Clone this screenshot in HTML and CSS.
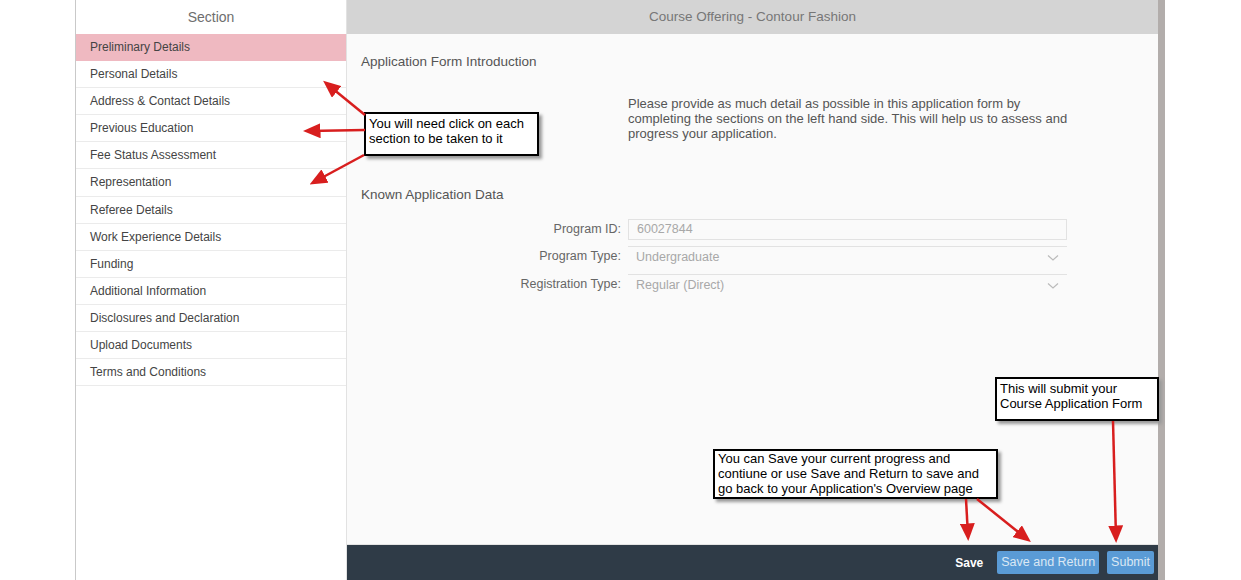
FILE: index.html
```html
<!DOCTYPE html>
<html lang="en">

<head>
    <meta charset="UTF-8">
    <meta name="viewport" content="width=device-width, initial-scale=1.0">
    <title>Course Offering - Contour Fashion</title>
    <link rel="stylesheet" href="styles.css">
</head>

<body>
    <div class="app">
        <!-- section list -->
        <div class="sidebar">
            <div class="sidebar-title">Section</div>
            <ul class="section-list">
                <li class="active">Preliminary Details</li>
                <li>Personal Details</li>
                <li>Address &amp; Contact Details</li>
                <li>Previous Education</li>
                <li>Fee Status Assessment</li>
                <li>Representation</li>
                <li>Referee Details</li>
                <li>Work Experience Details</li>
                <li>Funding</li>
                <li>Additional Information</li>
                <li>Disclosures and Declaration</li>
                <li>Upload Documents</li>
                <li>Terms and Conditions</li>
            </ul>
        </div>
        <!-- main panel -->
        <div class="main">
            <div class="main-title">Course Offering - Contour Fashion</div>
            <div class="main-body">
                <h3 class="block-title intro-title">Application Form Introduction</h3>
                <p class="intro-text">Please provide as much detail as possible in this application form by completing the sections on the left hand side. This will help us to assess and progress your application.</p>
                <h3 class="block-title data-title">Known Application Data</h3>
                <div class="form-grid">
                    <label>Program ID:</label>
                    <div class="field field-input">60027844</div>
                    <label>Program Type:</label>
                    <div class="field field-select">Undergraduate
                        <svg class="chevron" width="12" height="8" viewBox="0 0 12 8"><path d="M1 1.5 L6 6 L11 1.5" fill="none" stroke="#bbb" stroke-width="1.2"/></svg>
                    </div>
                    <label>Registration Type:</label>
                    <div class="field field-select">Regular (Direct)
                        <svg class="chevron" width="12" height="8" viewBox="0 0 12 8"><path d="M1 1.5 L6 6 L11 1.5" fill="none" stroke="#bbb" stroke-width="1.2"/></svg>
                    </div>
                </div>
            </div>
            <div class="footer">
                <a href="javascript:;" class="btn-text">Save</a>
                <a href="javascript:;" class="btn">Save and Return</a>
                <a href="javascript:;" class="btn">Submit</a>
            </div>
        </div>
    </div>

    <!-- annotations -->
    <div class="callout callout-sections">You will need click on each section to be taken to it</div>
    <div class="callout callout-submit">This will submit your Course Application Form</div>
    <div class="callout callout-save">You can Save your current progress and contiune or use Save and Return to save and go back to your Application's Overview page</div>

    <svg class="arrows" width="1241" height="580" viewBox="0 0 1241 580">
        <defs>
            <marker id="head" markerWidth="7" markerHeight="6" refX="5" refY="3" orient="auto" markerUnits="strokeWidth">
                <path d="M0 0 L7 3 L0 6 Z" fill="#d81e1e"/>
            </marker>
        </defs>
        <g stroke="#d81e1e" stroke-width="2.5" fill="none" marker-end="url(#head)">
            <line x1="365" y1="115" x2="327" y2="84"/>
            <line x1="365" y1="130" x2="308" y2="131"/>
            <line x1="364" y1="155" x2="314" y2="182"/>
            <line x1="1113" y1="421" x2="1116" y2="538"/>
            <line x1="966" y1="499" x2="968" y2="536"/>
            <line x1="977" y1="499" x2="1027" y2="539"/>
        </g>
    </svg>
</body>

</html>
```

FILE: styles.css
```css
ul,
li,
div,
p,
h3,
a {
    padding: 0px;
    margin: 0px;
}

body {
    margin: 0;
    background-color: #fff;
    font-family: "Liberation Sans", Arial, sans-serif;
    position: relative;
    width: 1241px;
    height: 580px;
    overflow: hidden;
}

a {
    text-decoration: none;
}

.app {
    display: flex;
    width: 1082px;
    height: 580px;
    margin-left: 75px;
    border-left: 1px solid #c9c9c9;
    border-right: 7px solid #b2adab;
}

.sidebar {
    width: 270px;
    background-color: #fff;
    border-right: 1px solid #e2e2e2;
}

.sidebar-title {
    height: 34px;
    line-height: 34px;
    text-align: center;
    font-size: 14px;
    color: #6e6e6e;
}

.section-list {
    list-style: none;
}

.section-list li {
    height: 26.1px;
    line-height: 27px;
    padding-left: 14px;
    font-size: 12px;
    color: #444;
    border-bottom: 1px solid #ebebeb;
}

.section-list li.active {
    background-color: #efb9c1;
    border-bottom-color: #efb9c1;
}

.main {
    flex: 1;
    display: flex;
    flex-direction: column;
}

.main-title {
    height: 34px;
    line-height: 34px;
    text-align: center;
    font-size: 13.5px;
    color: #777;
    background-color: #d4d4d4;
}

.main-body {
    flex: 1;
    background-color: #fafafa;
    padding: 0 14px;
    border-bottom: 1px solid #e4e4e4;
}

.block-title {
    font-size: 13.5px;
    font-weight: normal;
    color: #555;
    line-height: 16px;
}

.intro-title {
    margin-top: 20px;
}

.intro-text {
    margin: 26px 0 0 267px;
    width: 445px;
    font-size: 13px;
    line-height: 15px;
    color: #555;
}

.data-title {
    margin-top: 46px;
}

.form-grid {
    display: grid;
    grid-template-columns: 260px 439px;
    column-gap: 7px;
    row-gap: 6px;
    margin-top: 16px;
}

.form-grid label {
    text-align: right;
    font-size: 12.5px;
    line-height: 21px;
    color: #666;
}

.field {
    position: relative;
    height: 21px;
    line-height: 21px;
    padding-left: 8px;
    font-size: 12.5px;
    color: #a8a8a8;
}

.field-input {
    border: 1px solid #e2e2e2;
    height: 19px;
    line-height: 19px;
}

.field-select {
    border-top: 1px solid #e2e2e2;
}

.chevron {
    position: absolute;
    right: 8px;
    top: 7px;
}

.footer {
    height: 35px;
    background-color: #2f3b47;
    display: flex;
    align-items: center;
    justify-content: flex-end;
    gap: 8px;
    padding-right: 4px;
}

.btn-text {
    color: #fff;
    font-size: 12px;
    font-weight: bold;
    padding: 0 6px;
}

.btn {
    height: 23px;
    line-height: 23px;
    padding: 0 4px;
    border-radius: 2px;
    background-color: #5a9bd6;
    color: #dbe8f4;
    font-size: 12.5px;
}

.callout {
    position: absolute;
    background-color: #fff;
    border: 2px solid #000;
    box-shadow: 3px 3px 3px #9a9a9a;
    padding: 2px 3px;
    font-size: 13px;
    line-height: 15px;
    color: #000;
    box-sizing: border-box;
}

.callout-sections {
    left: 364px;
    top: 112px;
    width: 175px;
    height: 44px;
}

.callout-submit {
    left: 995px;
    top: 377px;
    width: 164px;
    height: 44px;
}

.callout-save {
    left: 713px;
    top: 449px;
    width: 285px;
    height: 50px;
    padding-top: 0;
    line-height: 15px;
}

.arrows {
    position: absolute;
    left: 0;
    top: 0;
    pointer-events: none;
}
```
